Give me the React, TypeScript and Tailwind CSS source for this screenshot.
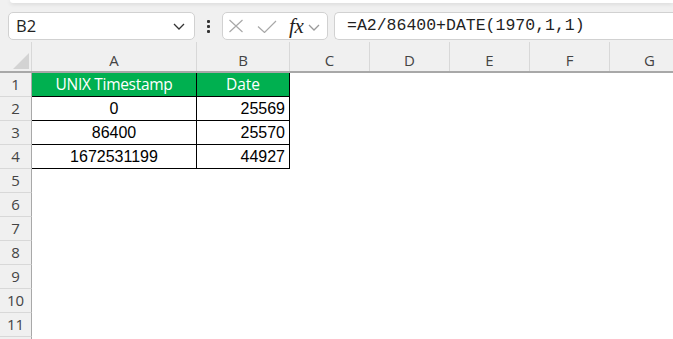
import React from "react";

const cols = [
  { key: "A", w: "w-[165px]" },
  { key: "B", w: "w-[93px]" },
  { key: "C", w: "w-[80px]" },
  { key: "D", w: "w-[80px]" },
  { key: "E", w: "w-[80px]" },
  { key: "F", w: "w-[80px]" },
  { key: "G", w: "w-[80px]" },
];

const data = [
  { a: "0", b: "25569" },
  { a: "86400", b: "25570" },
  { a: "1672531199", b: "44927" },
];

function Chevron({ className }: { className: string }) {
  return (
    <svg className={className} width="12" height="7" viewBox="0 0 12 7" fill="none">
      <path d="M1 1l5 5 5-5" stroke="currentColor" strokeWidth="1.3" />
    </svg>
  );
}

function RowHead({ n }: { n?: number }) {
  return (
    <div className="w-[32px] h-[24px] shrink-0 flex items-center justify-center border-r border-r-[#a8a8a8] border-b border-b-[#d8d8d8] bg-[#f0f0f0] text-[15px] text-[#444] font-['Open_Sans',sans-serif] leading-none">
      {n}
    </div>
  );
}

export default function App() {
  return (
    <div className="w-[673px] h-[339px] overflow-hidden bg-[#f0f0f0] font-['Liberation_Sans',Arial,sans-serif]">
      {/* ribbon edge */}
      <div className="h-[3px] ml-[10px] bg-white rounded-bl-[6px] shadow-[0_1px_4px_rgba(0,0,0,0.12)]" />

      {/* formula bar */}
      <div className="flex items-center h-[28px] mt-[9px]">
        <div className="ml-[8px] w-[187px] h-[28px] shrink-0 flex items-center justify-between bg-white border border-[#d1d1d1] rounded-[5px] pl-[7px] pr-[9px]">
          <span className="text-[16.5px] text-[#222] font-['Open_Sans',sans-serif]">B2</span>
          <Chevron className="text-[#333] mt-[1px]" />
        </div>
        <div className="w-[27px] shrink-0 flex flex-col items-center gap-[2px] mt-[1px]">
          <span className="w-[3px] h-[3px] bg-[#333] rounded-[1px]" />
          <span className="w-[3px] h-[3px] bg-[#333] rounded-[1px]" />
          <span className="w-[3px] h-[3px] bg-[#333] rounded-[1px]" />
        </div>
        <div className="w-[106px] h-[28px] shrink-0 flex items-center bg-white border border-[#d1d1d1] rounded-[5px]">
          <svg className="ml-[5px]" width="16" height="14" viewBox="0 0 16 14" fill="none">
            <path d="M1.5 1l13 12M14.5 1l-13 12" stroke="#a8a8a8" strokeWidth="1.2" />
          </svg>
          <svg className="ml-[13px]" width="20" height="13" viewBox="0 0 20 13" fill="none">
            <path d="M1 6.5l6.5 6 11.5-11.5" stroke="#a8a8a8" strokeWidth="1.2" />
          </svg>
          <span className="ml-[12px] text-[21px] leading-none italic text-[#1f1f1f] font-['Liberation_Serif',serif] tracking-[-0.3px]">fx</span>
          <Chevron className="ml-[4px] text-[#9a9a9a] mt-[2px]" />
        </div>
        <div className="ml-[6px] flex-1 h-[28px] flex items-center bg-white border border-[#d1d1d1] border-r-0 rounded-l-[5px] pl-[12px]">
          <span className="text-[16.5px] text-[#1f1f1f] font-['Liberation_Mono',monospace]">=A2/86400+DATE(1970,1,1)</span>
        </div>
      </div>

      {/* column headers */}
      <div className="flex h-[31px] mt-[2px] border-b-2 border-b-[#a8a8a8]">
        <div className="w-[32px] shrink-0 border-r border-r-[#d8d8d8] relative">
          <svg className="absolute left-[13px] top-[11px]" width="16" height="16" viewBox="0 0 16 16">
            <path d="M16 0V16H0Z" fill="#d3d3d3" />
          </svg>
        </div>
        {cols.map((c) => (
          <div
            key={c.key}
            className={`${c.w} shrink-0 flex items-end justify-center pb-[1px] border-r border-r-[#d8d8d8] text-[15px] leading-[20px] text-[#444] font-['Open_Sans',sans-serif]`}
          >
            {c.key}
          </div>
        ))}
      </div>

      {/* row 1 */}
      <div className="flex">
        <RowHead n={1} />
        <div className="w-[165px] h-[24px] shrink-0 flex items-center justify-center bg-[#00b050] border-r border-b border-black text-white text-[15.5px] font-['Open_Sans',sans-serif] tracking-[-0.3px]">
          UNIX Timestamp
        </div>
        <div className="w-[93px] h-[24px] shrink-0 flex items-center justify-center bg-[#00b050] border-r border-b border-black text-white text-[15.5px] font-['Open_Sans',sans-serif]">
          Date
        </div>
        <div className="flex-1 bg-white" />
      </div>

      {data.map((r, i) => (
        <div key={i} className="flex">
          <RowHead n={i + 2} />
          <div className="w-[165px] h-[24px] shrink-0 flex items-center justify-center bg-white border-r border-b border-black text-[16px] text-black">
            {r.a}
          </div>
          <div className="w-[93px] h-[24px] shrink-0 flex items-center justify-end pr-[4px] bg-white border-r border-b border-black text-[16px] text-black">
            {r.b}
          </div>
          <div className="flex-1 bg-white" />
        </div>
      ))}

      {[5, 6, 7, 8, 9, 10, 11].map((n) => (
        <div key={n} className="flex">
          <RowHead n={n} />
          <div className="flex-1 bg-white" />
        </div>
      ))}

      {/* next row, only its top edge shows */}
      <div className="flex">
        <RowHead />
        <div className="flex-1 bg-white" />
      </div>
    </div>
  );
}
